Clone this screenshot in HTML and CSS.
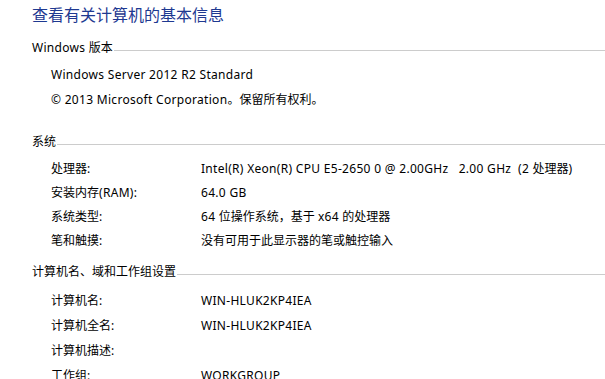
FILE: index.html
```html
<!DOCTYPE html>
<html lang="zh-CN">
<head>
<meta charset="utf-8">
<link rel="stylesheet" href="styles.css">
</head>
<body>
<div class="page">
  <h1 class="title">查看有关计算机的基本信息</h1>

  <section class="sec sec-win">
    <div class="sec-head"><span class="sec-text"><span class="lat">Windows </span>版本</span><span class="sec-line"></span></div>
    <div class="plain"><span class="lat">Windows Server 2012 R2 Standard</span></div>
    <div class="plain"><span class="lat">© 2013 Microsoft Corporation</span>。保留所有权利。</div>
  </section>

  <section class="sec sec-sys">
    <div class="sec-head"><span class="sec-text">系统</span><span class="sec-line"></span></div>
    <div class="row"><span class="lbl">处理器:</span><span class="val"><span class="lat">Intel(R) Xeon(R) CPU E5-2650 0 @ 2.00GHz   2.00 GHz  (2 </span>处理器)</span></div>
    <div class="row"><span class="lbl">安装内存<span class="lat">(RAM):</span></span><span class="val"><span class="lat">64.0 GB</span></span></div>
    <div class="row"><span class="lbl">系统类型:</span><span class="val"><span class="lat">64 </span>位操作系统，基于 <span class="lat">x64 </span>的处理器</span></div>
    <div class="row"><span class="lbl">笔和触摸:</span><span class="val">没有可用于此显示器的笔或触控输入</span></div>
  </section>

  <section class="sec sec-comp">
    <div class="sec-head"><span class="sec-text">计算机名、域和工作组设置</span><span class="sec-line"></span></div>
    <div class="row"><span class="lbl">计算机名:</span><span class="val"><span class="lat">WIN-HLUK2KP4IEA</span></span></div>
    <div class="row"><span class="lbl">计算机全名:</span><span class="val"><span class="lat">WIN-HLUK2KP4IEA</span></span></div>
    <div class="row"><span class="lbl">计算机描述:</span><span class="val"></span></div>
    <div class="row"><span class="lbl">工作组:</span><span class="val"><span class="lat">WORKGROUP</span></span></div>
  </section>
</div>
</body>
</html>
```

FILE: styles.css
```css
html, body {
  margin: 0;
  padding: 0;
  background: #ffffff;
  overflow: hidden;
}
body {
  font-family: "Noto Sans", "Noto Sans CJK SC", sans-serif;
  font-size: 12px;
  color: #000;
}
.page {
  padding: 4px 0 0 32px;
}
.title {
  margin: 0;
  font-family: "Noto Sans CJK SC", sans-serif;
  font-size: 16px;
  font-weight: normal;
  line-height: 20px;
  color: #1e3991;
}
.lat {
  letter-spacing: 0.3px;
}
.sec-head {
  display: flex;
  align-items: center;
  height: 16px;
  line-height: 16px;
}
.sec-text {
  white-space: nowrap;
  padding-right: 1px;
}
.sec-line {
  flex: 1;
  height: 1px;
  background: #cccccc;
  margin-top: 5px;
}
.sec-win { margin-top: 16px; }
.sec-win .sec-head { margin-bottom: 6px; }
.plain {
  height: 25px;
  line-height: 25px;
  padding-left: 19px;
  white-space: pre;
}
.row {
  display: grid;
  grid-template-columns: 150px 1fr;
  padding-left: 19px;
  height: 24px;
  line-height: 24px;
  white-space: pre;
}
.sec-sys { margin-top: 22px; }
.sec-sys .sec-head { margin-bottom: 7px; }
.sec-comp { margin-top: 11px; }
.sec-comp .sec-head { margin-bottom: 8px; }
.sec-comp .row { height: 25px; line-height: 25px; }
```
